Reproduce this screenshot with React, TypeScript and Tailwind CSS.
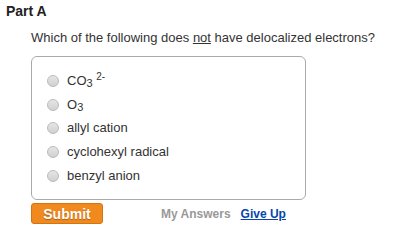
import React, { useState } from 'react';

const options = [
  { key: 'co3', label: <>CO<sub className="text-[11px] relative top-[2px] align-baseline">3</sub> <sup className="text-[10px] relative -top-[5px] align-baseline">2-</sup></> },
  { key: 'o3', label: <>O<sub className="text-[11px] relative top-[2px] align-baseline">3</sub></> },
  { key: 'allyl', label: <>allyl cation</> },
  { key: 'cyclo', label: <>cyclohexyl radical</> },
  { key: 'benzyl', label: <>benzyl anion</> },
];

const App = () => {
  const [selected, setSelected] = useState<string | null>(null);

  return (
    <div className="w-[398px] h-[249px] bg-white font-['Liberation_Sans',Arial,sans-serif] text-[#333]">
      <div className="pl-[6px] pt-[3px] text-[14px] font-bold leading-[17px] text-[#222]">Part A</div>

      <div className="pl-[31px] pt-[10px]">
        <p className="text-[13px] leading-[16px] text-[#333]">
          Which of the following does <span className="underline">not</span> have delocalized electrons?
        </p>

        {/* answer choices */}
        <div className="mt-[10px] w-[275px] h-[144px] border border-[#aaa] rounded-[6px] pl-[15px] pt-[12px]">
          <div className="flex flex-col">
            {options.map((o) => (
              <label key={o.key} className="flex items-center h-[23.7px] cursor-pointer">
                <span
                  onClick={() => setSelected(o.key)}
                  className={
                    selected === o.key
                      ? 'w-[12px] h-[12px] rounded-full border-[4px] border-[#888] bg-white shrink-0'
                      : 'w-[12px] h-[12px] rounded-full border border-[#bbb] bg-gradient-to-b from-[#e6e6e6] to-[#d0d0d0] shrink-0'
                  }
                />
                <span className="ml-[8px] text-[13px] leading-[16px] text-[#333]">{o.label}</span>
              </label>
            ))}
          </div>
        </div>

        <div className="flex items-center mt-[3px]">
          <button className="w-[72px] h-[21px] rounded-[3px] border border-[#d27410] bg-[#f0891e] text-white text-[14px] font-bold leading-none [text-shadow:0_1px_1px_rgba(0,0,0,0.3)]">
            Submit
          </button>
          <span className="ml-[58px] text-[12px] font-bold text-[#999]">My Answers</span>
          <span className="ml-[10px] text-[12px] font-bold text-[#0645ad] underline">Give Up</span>
        </div>
      </div>
    </div>
  );
};

export default App;
